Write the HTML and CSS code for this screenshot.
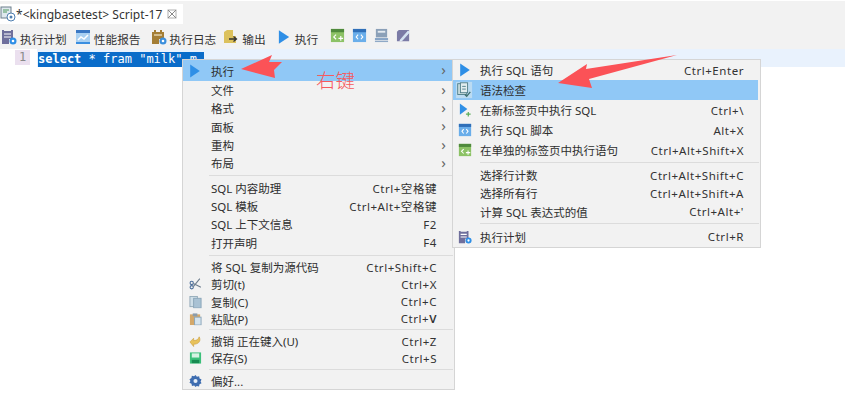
FILE: index.html
```html
<!DOCTYPE html>
<html lang="zh">
<head>
<meta charset="utf-8">
<title>Script-17</title>
<link rel="stylesheet" href="styles.css">
</head>
<body>
<svg class="defs" width="0" height="0" aria-hidden="true">
  <symbol id="i-play" viewBox="0 0 12 14"><path d="M1.500 1L10.500 7L1.500 13Z" fill="#2f8fe6"/></symbol>
  <symbol id="i-plan" viewBox="0 0 16 16"><path d="M1 1h2v1h7V1h2v9l-4 0v5H1Z" fill="#6f6f9c"/><path d="M3 5h7M3 8h7" stroke="#fff" stroke-width="1.200"/><circle cx="12" cy="12" r="3.500" fill="#2f8fe6"/><circle cx="12" cy="12" r="1.300" fill="#fff"/></symbol>
  <symbol id="i-perf" viewBox="0 0 16 16"><rect x="1" y="1" width="14" height="14" fill="#a9d0f2"/><rect x="1" y="1" width="14" height="3" fill="#3a78c4"/><path d="M3 11l3-3 3 2 4-4" fill="none" stroke="#fff" stroke-width="1.500"/><rect x="1" y="13" width="14" height="2" fill="#3a8ee0"/></symbol>
  <symbol id="i-log" viewBox="0 0 16 16"><path d="M1 3h2V1h2v2h4V1h2v2h2v7l-5 0v5H1Z" fill="#a47e35"/><path d="M3 6h8" stroke="#f2e6c8" stroke-width="1.200"/><circle cx="12" cy="12" r="3.500" fill="#3c8fdc"/><circle cx="12" cy="12" r="1.300" fill="#fff"/></symbol>
  <symbol id="i-out" viewBox="0 0 16 16"><path d="M1 3l3-2h6v6h3V14H1Z" fill="#dcc15c"/><path d="M6 10h7M10.500 7.500l3 2.500-3 2.500" fill="none" stroke="#333" stroke-width="1.300"/></symbol>
  <symbol id="i-tabrun" viewBox="0 0 16 16"><rect x="1" y="1" width="14" height="14" fill="#8cc265"/><rect x="1" y="1" width="14" height="3.500" fill="#4f8a3c"/><path d="M6.500 7L4 9.500 6.500 12" fill="none" stroke="#fff" stroke-width="1.200"/><path d="M9 11h5M11.500 8.500v5" stroke="#fff" stroke-width="1.200"/></symbol>
  <symbol id="i-script" viewBox="0 0 16 16"><rect x="1" y="1" width="14" height="14" fill="#6aaeea"/><rect x="1" y="1" width="14" height="3.500" fill="#2f6fb8"/><path d="M6.500 7L4.500 9.500 6.500 12M9.500 7l2 2.500-2 2.500" fill="none" stroke="#fff" stroke-width="1.200"/></symbol>
  <symbol id="i-panel" viewBox="0 0 16 16"><rect x="2" y="1" width="12" height="9" fill="#8ba0b8"/><rect x="4" y="3" width="8" height="2" fill="#e4eaf0"/><rect x="1" y="11" width="14" height="1.500" fill="#5d86b4"/><rect x="1" y="13.500" width="14" height="1.500" fill="#8fa9c6"/></symbol>
  <symbol id="i-edit" viewBox="0 0 16 16"><path d="M3 2h11v12H1V4Z" fill="#7b7ba6"/><path d="M5 12l8-9 1.500 1.500-8 9L4 14Z" fill="#cfe2f5" stroke="#fff" stroke-width=".5"/></symbol>
  <symbol id="i-file" viewBox="0 0 16 16"><rect x="1" y="1" width="10" height="11" fill="#dfe8ee" stroke="#6d7f8c"/><path d="M3 4h6M3 6h4" stroke="#4f9a5f"/><circle cx="11" cy="11" r="4" fill="#fff" stroke="#4f7fb0"/><circle cx="11" cy="11" r="1.500" fill="#4f7fb0"/></symbol>
  <symbol id="i-close" viewBox="0 0 10 10"><rect x="1" y="1" width="8" height="8" fill="none" stroke="#b0b0b0"/><path d="M1 1l8 8M9 1l-8 8" stroke="#8a8a8a"/></symbol>
  <symbol id="i-check" viewBox="0 0 20 20"><rect x="1" y="1" width="18" height="18" fill="#d8e8f0" opacity=".6"/><rect x="3" y="3" width="10" height="12" fill="#c9dde0" stroke="#4f7d88"/><rect x="6" y="2" width="8" height="11" fill="#e2edef" stroke="#4f7d88"/><path d="M8 6h4M8 9h4" stroke="#4f7d88"/><path d="M11 15l2 2 4-5" fill="none" stroke="#3e6f6e" stroke-width="1.500"/></symbol>
  <symbol id="i-playadd" viewBox="0 0 14 16"><path d="M1.500 1L9.500 7L1.500 13Z" fill="#2f8fe6"/><path d="M8 12.500h5M10.500 10v5" stroke="#5cae5c" stroke-width="1.300"/></symbol>
  <symbol id="i-cut" viewBox="0 0 12 12"><circle cx="2.500" cy="5" r="1.500" fill="none" stroke="#4d6f9a"/><circle cx="2.500" cy="9" r="1.500" fill="none" stroke="#4d6f9a"/><path d="M4 5.500L11 9M4 8.500L10 1" stroke="#6f7f8f"/></symbol>
  <symbol id="i-copy" viewBox="0 0 14 14"><rect x="1" y="1" width="8" height="11" fill="#cfdfe8" stroke="#92a9b8"/><rect x="5" y="3" width="8" height="10.500" fill="#a9c2d4" stroke="#8aa5b8"/></symbol>
  <symbol id="i-paste" viewBox="0 0 14 14"><rect x="1" y="2" width="11" height="11.500" fill="#d4a86a"/><rect x="4" y="1" width="5" height="3" fill="#8b9cab"/><rect x="6" y="5" width="7" height="8.500" fill="#d5e4ee" stroke="#8aa5b8"/></symbol>
  <symbol id="i-undo" viewBox="0 0 14 14"><path d="M1 8l4-4v2.500c3 0 5-1 6-4 2 4 0 8-6 8V13Z" fill="#e8c25a" stroke="#c89a35" stroke-width=".6"/></symbol>
  <symbol id="i-save" viewBox="0 0 14 14"><rect x="1" y="1" width="12" height="12" fill="#3cc07a"/><rect x="3" y="2" width="8" height="4.500" fill="#d6f3e3"/><rect x="3" y="9" width="8" height="3.500" fill="#178a52"/></symbol>
  <symbol id="i-gear" viewBox="0 0 14 14"><path d="M7 .500l1.500 2 2.400-.6.500 2.400 2.100 1.200L12.500 7.500l1 2-2.200 1-.5 2.400-2.400-.5L7 13.500l-1.400-1.600-2.400.5-.5-2.400-2.200-1 1-2-1-2 2.100-1.200.5-2.400 2.400.6Z" fill="#3d6cb0"/><circle cx="7" cy="7" r="2.200" fill="#e4edf7"/></symbol>
</svg>

<div class="page">
  <div class="tabstrip">
    <div class="tab">
      <svg class="ic16"><use href="#i-file"/></svg>
      <span>*&lt;kingbasetest&gt; Script-17</span>
      <svg class="close"><use href="#i-close"/></svg>
    </div>
  </div>
  <div class="toolbar">
    <div class="tool"><svg class="ic16"><use href="#i-plan"/></svg><span>执行计划</span></div>
    <div class="tool"><svg class="ic16"><use href="#i-perf"/></svg><span>性能报告</span></div>
    <div class="tool"><svg class="ic16"><use href="#i-log"/></svg><span>执行日志</span></div>
    <div class="tool"><svg class="ic16"><use href="#i-out"/></svg><span>输出</span></div>
    <div class="tool"><svg class="ic16"><use href="#i-play"/></svg><span>执行</span></div>
    <svg class="ic14"><use href="#i-tabrun"/></svg>
    <svg class="ic14"><use href="#i-script"/></svg>
    <svg class="ic14"><use href="#i-panel"/></svg>
    <svg class="ic14"><use href="#i-edit"/></svg>
  </div>
  <div class="editor">
    <div class="gutter"><span class="lineno">1</span></div>
    <div class="code"><div class="line"><span class="sel"><b>select</b> * fram "milk" m </span></div></div>
  </div>

  <div class="menu main-menu">
    <div class="row first active"><svg class="ic"><use href="#i-play"/></svg><span class="label">执行</span><span class="chev">›</span></div>
    <div class="row"><span class="label">文件</span><span class="chev">›</span></div>
    <div class="row"><span class="label">格式</span><span class="chev">›</span></div>
    <div class="row"><span class="label">面板</span><span class="chev">›</span></div>
    <div class="row"><span class="label">重构</span><span class="chev">›</span></div>
    <div class="row"><span class="label">布局</span><span class="chev">›</span></div>
    <div class="sep after-submenus"></div>
    <div class="row"><span class="label">SQL 内容助理</span><span class="key">Ctrl+空格键</span></div>
    <div class="row"><span class="label">SQL 模板</span><span class="key">Ctrl+Alt+空格键</span></div>
    <div class="row"><span class="label">SQL 上下文信息</span><span class="key">F2</span></div>
    <div class="row"><span class="label">打开声明</span><span class="key">F4</span></div>
    <div class="sep"></div>
    <div class="row tight"><span class="label">将 SQL 复制为源代码</span><span class="key">Ctrl+Shift+C</span></div>
    <div class="row tight"><svg class="ic small"><use href="#i-cut"/></svg><span class="label">剪切(t)</span><span class="key">Ctrl+X</span></div>
    <div class="row tight"><svg class="ic small"><use href="#i-copy"/></svg><span class="label">复制(C)</span><span class="key">Ctrl+C</span></div>
    <div class="row tight"><svg class="ic small"><use href="#i-paste"/></svg><span class="label">粘贴(P)</span><span class="key">Ctrl+<b>V</b></span></div>
    <div class="sep snug"></div>
    <div class="row tight"><svg class="ic small"><use href="#i-undo"/></svg><span class="label">撤销 正在键入(U)</span><span class="key">Ctrl+Z</span></div>
    <div class="row tight"><svg class="ic small"><use href="#i-save"/></svg><span class="label">保存(S)</span><span class="key">Ctrl+S</span></div>
    <div class="sep snug"></div>
    <div class="row"><svg class="ic small"><use href="#i-gear"/></svg><span class="label">偏好...</span></div>
  </div>

  <div class="menu sub-menu">
    <div class="row tall"><svg class="ic"><use href="#i-play"/></svg><span class="label">执行 SQL 语句</span><span class="key">Ctrl+Enter</span></div>
    <div class="row tall active"><svg class="ic big"><use href="#i-check"/></svg><span class="label">语法检查</span></div>
    <div class="row tall"><svg class="ic"><use href="#i-playadd"/></svg><span class="label">在新标签页中执行 SQL</span><span class="key">Ctrl+\</span></div>
    <div class="row tall"><svg class="ic"><use href="#i-script"/></svg><span class="label">执行 SQL 脚本</span><span class="key">Alt+X</span></div>
    <div class="row tall"><svg class="ic"><use href="#i-tabrun"/></svg><span class="label">在单独的标签页中执行语句</span><span class="key">Ctrl+Alt+Shift+X</span></div>
    <div class="sep"></div>
    <div class="row"><span class="label">选择行计数</span><span class="key">Ctrl+Alt+Shift+C</span></div>
    <div class="row"><span class="label">选择所有行</span><span class="key">Ctrl+Alt+Shift+A</span></div>
    <div class="row"><span class="label">计算 SQL 表达式的值</span><span class="key">Ctrl+Alt+'</span></div>
    <div class="sep"></div>
    <div class="row tall"><svg class="ic"><use href="#i-plan"/></svg><span class="label">执行计划</span><span class="key">Ctrl+R</span></div>
  </div>

  <svg class="arrows" width="845" height="413" viewBox="0 0 845 413" aria-hidden="true">
    <path d="M241 69L272 55L269 62L282 62L274 70L275 78Z" fill="#fb5257"/>
    <path d="M558 83L587 64L586 69L677 55L589 79L592 88Z" fill="#fb5257"/>
  </svg>
  <div class="note">右键</div>
</div>
</body>
</html>
```
FILE: styles.css
```css
* { box-sizing: border-box; }
html, body { margin: 0; padding: 0; background: #fff; }
body {
  width: 845px;
  height: 413px;
  overflow: hidden;
  font-family: "Noto Sans", "Noto Sans CJK SC", sans-serif;
  font-size: 12px;
  color: #2b2b2b;
}
.defs { position: absolute; }
.page { position: relative; width: 845px; height: 413px; background: #fff; }

.tabstrip {
  height: 24px;
  padding-top: 3px;
  background: #f2f2f2;
  border-top: 1px solid #fff;
  display: flex;
}
.tab {
  width: 183px;
  display: flex;
  align-items: center;
  background: #fff;
  font-size: 12.100px;
  color: #333;
}
.close { width: 10px; height: 10px; margin-left: 5px; flex: none; }
.ic16 { width: 16px; height: 16px; flex: none; }
.ic14 { width: 15px; height: 15px; flex: none; margin-bottom: 3px; margin-left: 7px; }

.toolbar {
  height: 25px;
  display: flex;
  align-items: center;
  padding-left: 1px;
  background: #f2f2f2;
}
.tool {
  display: flex;
  align-items: center;
  gap: 3px;
  margin-right: 10px;
  font-size: 11.700px;
  color: #333;
}
.tool span { padding-top: 3px; }
.tool:nth-child(1) { margin-right: 8px; }
.tool:nth-child(3) { margin-right: 7px; }
.tool:nth-child(4) { margin-right: 10px; }
.tool:nth-child(5) { margin-right: 5px; }

.editor { display: flex; height: 364px; }
.gutter {
  width: 37px;
  display: flex;
  justify-content: flex-end;
  align-items: flex-start;
  padding-right: 7px;
  padding-top: 1px;
  background: #fff;
}
.lineno {
  width: 15px;
  height: 15px;
  background: #ebe0ef;
  color: #8a8a8a;
  font: 12px/15px "DejaVu Sans Mono", monospace;
  text-align: center;
}
.code { flex: 1; }
.line { height: 18px; background: #e9f2fd; padding-top: 1px; white-space: pre; }
.sel {
  display: inline-block;
  height: 15px;
  margin-left: 1px;
  background: #0a6cc9;
  color: #fff;
  font: 12px/15px "DejaVu Sans Mono", monospace;
}

.menu {
  position: absolute;
  background: #f2f2f2;
  border: 1px solid #d5d5d5;
  display: flex;
  flex-direction: column;
}
.main-menu { left: 182px; top: 59px; width: 273px; height: 331px; }
.sub-menu { left: 452px; top: 59px; width: 309px; height: 189px; }

.row {
  position: relative;
  height: 18.300px;
  flex: none;
  display: flex;
  align-items: center;
  padding: 0 8px 0 28px;
  font-size: 11.500px;
  color: #2e2e2e;
  white-space: nowrap;
}
.row.first { height: 21px; }
.row.tight { height: 17.200px; }
.row.tall { height: 20px; }
.row.active { background: #90c8f6; }
.label { flex: 1; }
.key { color: #333; letter-spacing: .55px; }
.key b { font-weight: 600; }
.chev { color: #666; font-size: 15px; line-height: 1; margin-top: -2px; margin-right: 7px; }
.ic {
  position: absolute;
  left: 5px;
  top: 50%;
  width: 14px;
  height: 15px;
  transform: translateY(-50%);
}
.ic.small { left: 6px; width: 13px; height: 13px; }
.ic.big { left: 2px; width: 18px; height: 18px; }
.sep { height: 1px; flex: none; margin: 3px 1px 3px 26px; background: #dcdcdc; }
.sep.after-submenus { margin-bottom: 2px; }
.sep.snug { margin-top: 2px; margin-bottom: 2px; }
.sub-menu .sep { margin: 2px 1px 3px 27px; }
.sub-menu .row { padding-left: 27px; padding-right: 16px; }
.sub-menu .row.active { margin: 0 2px 0 0; }
.main-menu .row { padding-right: 17px; }
.main-menu .row:has(.chev) { padding-right: 1px; }

.arrows { position: absolute; left: 0; top: 0; pointer-events: none; }
.note {
  position: absolute;
  left: 316px;
  top: 67px;
  font-size: 19.500px;
  line-height: 26px;
  color: #f65a5e;
  font-family: "Noto Sans CJK SC", sans-serif;
  font-weight: 300;
}
```
